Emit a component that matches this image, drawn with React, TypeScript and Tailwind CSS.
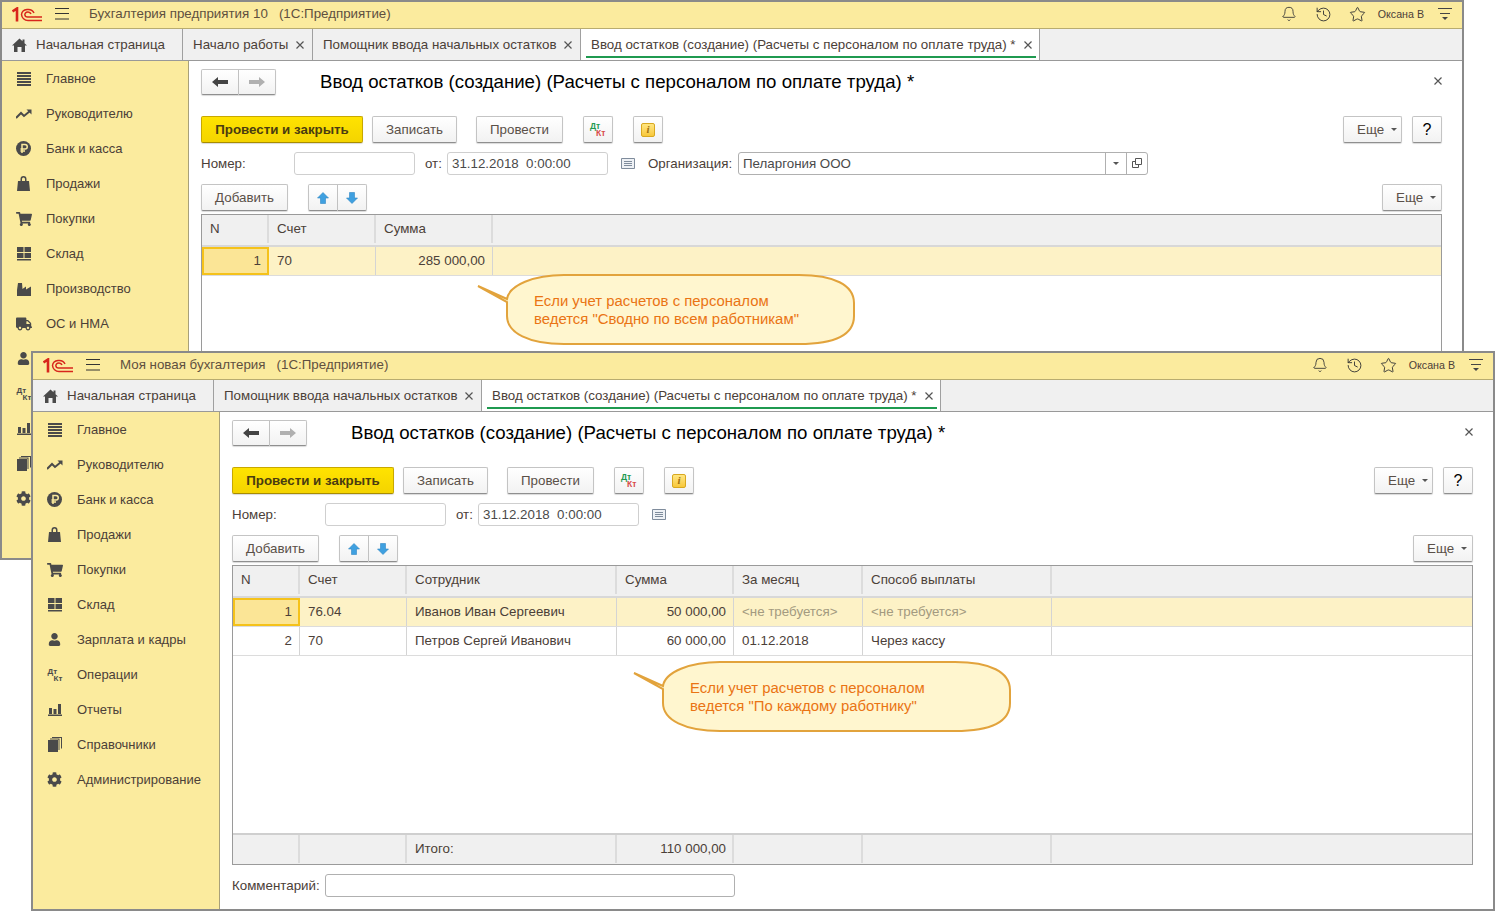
import { Bell, History, Star } from 'lucide-react';
import { FaCog, FaShoppingCart, FaUser, FaTruck } from 'react-icons/fa';
import { twMerge } from 'tailwind-merge';
import type { ReactNode } from 'react';

const TITLE = 'Ввод остатков (создание) (Расчеты с персоналом по оплате труда)';

const Logo = () => (
  <svg width="30" height="15" viewBox="0 0 30 15" fill="none" stroke="#d8261c">
    <path d="M.5 4.500L5 1.500V14.500" strokeWidth="2.600" />
    <path d="M22 6A6.500 5.500 0 0 0 9.500 7.500A6.500 6.500 0 0 0 16 13.500H30" strokeWidth="1.500" />
    <path d="M19 7A3.200 3 0 0 0 12.800 7.500A3 2.800 0 0 0 16 10H30" strokeWidth="1.500" />
  </svg>
);

const Hamburger = () => (
  <svg width="14" height="12" viewBox="0 0 14 12" stroke="#333">
    <path d="M0 .5H14M0 5.500H14M0 11H14" />
  </svg>
);

const MenuDown = () => (
  <svg width="14" height="14" viewBox="0 0 14 14" stroke="#444" fill="#444">
    <path d="M0 1.500H14M2 6.500H12" fill="none" />
    <path d="M4 10H10L7 13Z" stroke="none" />
  </svg>
);

const HomeIcon = () => (
  <svg width="15" height="14" viewBox="0 0 15 14" fill="#4a4a4a" className="mr-[9px] shrink-0">
    <path d="M0 7.500L7.500 .5L10.500 3.300V1.500H12.500V5.200L15 7.500H13V14H9.500V9H5.500V14H2V7.500Z" />
  </svg>
);

const c = '#4a4a4a';
const icons: Record<string, ReactNode> = {
  'Главное': (
    <svg width="14" height="14" viewBox="0 0 14 14" fill={c}>
      <path d="M0 0h14v2H0zM0 3h14v2H0zM0 6h14v2H0zM0 9h14v2H0zM0 12h14v2H0z" />
    </svg>
  ),
  'Руководителю': (
    <svg width="16" height="10" viewBox="0 0 16 10" fill="none" stroke={c} strokeWidth="2">
      <path d="M0 9 L5 4 L8 7 L14 2" />
      <path d="M10.500 .5 H15.500 V5.500 Z" fill={c} stroke="none" />
    </svg>
  ),
  'Банк и касса': (
    <svg width="15" height="15" viewBox="0 0 15 15">
      <circle cx="7.500" cy="7.500" r="7.500" fill={c} />
      <path d="M6 12V3.500H9a2 2 0 0 1 0 4.500H4.500M4.500 10H9" fill="none" stroke="#fbeb9e" strokeWidth="1.500" />
    </svg>
  ),
  'Продажи': (
    <svg width="13" height="15" viewBox="0 0 13 15" fill={c}>
      <path d="M1 5H3.500V3A3 3 0 0 1 9.500 3V5H12L13 15H0Z" />
      <path d="M5 5H8V3A1.500 1.500 0 0 0 5 3Z" fill="#fbeb9e" />
    </svg>
  ),
  'Покупки': <FaShoppingCart size={16} color={c} />,
  'Склад': (
    <svg width="14" height="14" viewBox="0 0 14 14" fill={c}>
      <path d="M0 0h6.500v5H0zM7.500 0H14v5H7.500zM0 6h6.500v5H0zM7.500 6H14v5H7.500zM0 12h14v1.500H0z" />
    </svg>
  ),
  'Производство': (
    <svg width="14" height="14" viewBox="0 0 14 14" fill={c}>
      <path d="M0 14V8L1 1H5L5.500 7L9 4.500V7.500L14 4.500V14Z" />
    </svg>
  ),
  'ОС и НМА': <FaTruck size={16} color={c} />,
  'Зарплата и кадры': <FaUser size={13} color={c} />,
  'Операции': (
    <span className="relative block h-[14px] w-[14px] text-[8px] leading-[7px] font-bold text-[#4a4a4a]">
      <span className="absolute top-0 left-0">Дт</span>
      <span className="absolute top-[7px] left-[6px]">Кт</span>
    </span>
  ),
  'Отчеты': (
    <svg width="14" height="13" viewBox="0 0 14 13" fill={c}>
      <path d="M1 5h3v6H1zM5.500 6h3v5h-3zM10 1h3v10h-3zM0 11.500h14V13H0z" />
    </svg>
  ),
  'Справочники': (
    <svg width="14" height="15" viewBox="0 0 14 15" fill={c}>
      <path d="M0 3h10v12H0zM2 1.500h9.500V13h-1V2.500H2zM4 0h10v11.500h-1V1H4z" />
    </svg>
  ),
  'Администрирование': <FaCog size={15} color={c} />,
};

const Sidebar = ({ items, labelled }: { items: string[]; labelled: number }) => (
  <aside className="w-[187px] shrink-0 border-r border-[#a8a07a] bg-[#fbeb9e]">
    {items.map((name, i) => (
      <div key={name} className="flex h-[35px] items-center text-[13px] whitespace-nowrap text-[#4b4038]">
        <span className="flex w-[44px] shrink-0 justify-center pr-[1px]">{icons[name]}</span>
        {i < labelled ? name : null}
      </div>
    ))}
  </aside>
);

const CloseX = ({ color = '#555' }: { color?: string }) => (
  <svg width="8" height="8" viewBox="0 0 8 8" stroke={color} strokeWidth="1.200">
    <path d="M.5 .5L7.500 7.500M7.500 .5L.5 7.500" />
  </svg>
);

const Tab = ({ label, width }: { label: string; width: string }) => (
  <div className={`flex items-center justify-between border-r border-[#a0a0a0] pr-[8px] pl-[10px] ${width}`}>
    <span className="whitespace-nowrap">{label}</span>
    <CloseX />
  </div>
);

const Btn = ({ children, className = '' }: { children: ReactNode; className?: string }) => (
  <button
    className={twMerge(
      'flex h-[27px] items-center justify-center rounded-[2px] border border-[#c4c4c4] border-b-[#8f8f8f] bg-gradient-to-b from-white to-[#f2f2f2] text-[13.33px] text-[#5a5048] shadow-[0_1px_1px_rgba(0,0,0,0.15)]',
      className,
    )}
  >
    {children}
  </button>
);

const Caret = () => <span className="ml-[7px] h-0 w-0 border-x-[3px] border-t-[3px] border-x-transparent border-t-[#555]" />;

const Arrow = ({ color, left }: { color: string; left?: boolean }) => (
  <svg width="16" height="10" viewBox="0 0 16 10" fill={color}>
    <path d={left ? 'M0 5L6 0V3H16V7H6V10Z' : 'M16 5L10 0V3H0V7H10V10Z'} />
  </svg>
);

const BlueArrow = ({ down }: { down?: boolean }) => (
  <svg width="12" height="12" viewBox="0 0 12 12" fill="#3fa0e0" stroke="#2f86c4" strokeWidth=".6">
    <path d={down ? 'M3.500 .5H8.500V6H11.500L6 11.500L.5 6H3.500Z' : 'M3.500 11.500H8.500V6H11.500L6 .5L.5 6H3.500Z'} />
  </svg>
);

const DtKt = () => (
  <span className="relative block h-[14px] w-[16px] text-[8.5px] leading-[7px] font-bold">
    <span className="absolute top-0 left-0 text-[#1f9a50]">Дт</span>
    <span className="absolute top-[7px] left-[6px] text-[#d84a4a]">Кт</span>
  </span>
);

const InfoIcon = () => (
  <span className="flex h-[14px] w-[14px] items-center justify-center rounded-[2px] border border-[#d8a820] bg-gradient-to-b from-[#ffe680] to-[#f8c838] font-['Liberation_Serif',serif] text-[11px] leading-none font-bold text-[#a07010] italic">
    i
  </span>
);

const Field = ({ value = '', className = '' }: { value?: string; className?: string }) => (
  <div className={`flex h-[23px] items-center rounded-[3px] border border-[#cfcfcf] bg-white px-[4px] pt-[1px] text-[13.33px] whitespace-pre text-[#4a4a4a] ${className}`}>
    {value}
  </div>
);

const ListIcon = () => (
  <svg width="14" height="11" viewBox="0 0 14 11" fill="#eef1f5" stroke="#7f8c9c">
    <path d="M.5 .5H13.500V10.500H.5Z" />
    <path d="M3 3.500H11M3 5.500H11M3 7.500H11" fill="none" />
  </svg>
);

type Col = { title: string; width: string; right?: boolean };
type Row = { cells: string[]; active?: boolean };

const Grid = ({ cols, rows, total, callout }: { cols: Col[]; rows: Row[]; total?: string[]; callout: ReactNode }) => (
  <div className="relative mt-[3px] flex min-h-0 flex-1 flex-col border border-[#9a9a9a] text-[13.33px] text-[#4b4038]">
    <div className="flex h-[32px] shrink-0 border-b-2 border-[#d8d8d8] bg-[#f0f0f0] pb-[2px]">
      {cols.map((col) => (
        <div key={col.title} className={`flex items-center border-r-2 border-[#dcdcdc] px-[8px] ${col.width}`}>
          {col.title}
        </div>
      ))}
      <div className="flex-1" />
    </div>
    {rows.map((row, r) => (
      <div key={r} className={`flex h-[29px] shrink-0 border-b border-[#dcdcdc] ${row.active ? 'bg-[#fdf2c6]' : 'bg-white'}`}>
        {cols.map((col, i) => (
          <div
            key={col.title}
            className={twMerge(
              'flex items-center border-r border-[#d4d4d4] px-[8px] whitespace-nowrap',
              col.width,
              col.right && 'justify-end pr-[7px]',
              row.active && i === 0 && 'border-2 border-[#f5c21a] bg-[#fbe596] pr-[6px]',
              row.cells[i].startsWith('<') && 'text-[#a39a80]',
            )}
          >
            {row.cells[i]}
          </div>
        ))}
        <div className="flex-1" />
      </div>
    ))}
    <div className="flex-1" />
    {total && (
      <div className="flex h-[31px] shrink-0 border-t-2 border-[#cfcfcf] bg-[#f0f0f0] pb-[1px]">
        {cols.map((col, i) => (
          <div
            key={col.title}
            className={twMerge('flex items-center border-r-2 border-[#dcdcdc] px-[8px]', col.width, col.right && 'justify-end pr-[6px]')}
          >
            {total[i]}
          </div>
        ))}
        <div className="flex-1" />
      </div>
    )}
    {callout}
  </div>
);

const Callout = ({ lines, className }: { lines: string[]; className: string }) => (
  <div className={`absolute h-[73px] w-[380px] ${className}`}>
    <svg width="380" height="73" viewBox="0 0 380 73" className="absolute inset-0">
      <path
        d="M31 26C33 12 58 2 88 2L323 2C358 2 378 12 378 30L378 43C378 62 358 71 323 71L88 71C53 71 31 60 31 43L31 29L2 13Z"
        fill="#fff6cf"
        stroke="#e2a33c"
        strokeWidth="2"
      />
    </svg>
    <div className="absolute top-[19px] left-[58px] text-[14.9px] leading-[18px] whitespace-nowrap text-[#ea7414]">
      {lines.map((l) => (
        <div key={l}>{l}</div>
      ))}
    </div>
  </div>
);

const Window = ({
  className,
  appName,
  tabs,
  sideItems,
  labelled,
  form,
  children,
  footer,
}: {
  className: string;
  appName: string;
  tabs: { label: string; width: string }[];
  sideItems: string[];
  labelled: number;
  form?: ReactNode;
  children: ReactNode;
  footer?: ReactNode;
}) => (
  <div className={`absolute flex h-[560px] w-[1464px] flex-col overflow-hidden border-2 border-[#8a8a8a] bg-white font-['Liberation_Sans',sans-serif] ${className}`}>
    <div className="flex h-[27px] shrink-0 items-center border-b border-[#b8ac70] bg-[#fbeb9e] pb-[2px] text-[13.33px] text-[#5f5040]">
      <span className="ml-[10px] flex w-[43px]">
        <Logo />
      </span>
      <Hamburger />
      <span className="ml-[20px] whitespace-pre">{appName}   (1С:Предприятие)</span>
      <div className="ml-auto flex items-center pr-[10px]">
        <Bell size={16} strokeWidth={1.300} color="#333" />
        <History size={17} strokeWidth={1.300} color="#333" className="ml-[18px]" />
        <Star size={17} strokeWidth={1.300} color="#333" className="ml-[17px]" />
        <span className="ml-[12px] text-[10.67px] text-[#4b4038]">Оксана В</span>
        <span className="ml-[14px] flex">
          <MenuDown />
        </span>
      </div>
    </div>
    <div className="flex h-[32px] shrink-0 border-b border-[#999] bg-[#f0f0f0] text-[13.33px] text-[#4b4038]">
      <div className="flex w-[181px] items-center border-r border-[#a0a0a0] pl-[10px] whitespace-nowrap">
        <HomeIcon />
        Начальная страница
      </div>
      {tabs.map((tab) => (
        <Tab key={tab.label} {...tab} />
      ))}
      <div className="relative flex w-[459px] items-center justify-between border-r border-[#a0a0a0] bg-white pr-[7px] pl-[10px]">
        <span className="whitespace-nowrap">{TITLE} *</span>
        <CloseX />
        <span className="absolute right-[3px] bottom-[2px] left-[5px] h-[2px] bg-[#1f9a50]" />
      </div>
    </div>
    <div className="flex min-h-0 flex-1">
      <Sidebar items={sideItems} labelled={labelled} />
      <main className="flex min-w-0 flex-1 flex-col pt-[8px] pr-[20px] pb-[12px] pl-[12px] text-[13.33px] text-[#4b4038]">
        <div className="flex h-[26px] shrink-0 items-start">
          <div className="flex">
            <Btn className="h-[26px] w-[38px] rounded-r-none">
              <Arrow color="#444" left />
            </Btn>
            <Btn className="h-[26px] w-[37px] rounded-l-none border-l-0">
              <Arrow color="#b0b0b0" />
            </Btn>
          </div>
          <h1 className="ml-[44px] text-[18.67px] leading-[25px] font-normal text-black">{TITLE} *</h1>
          <span className="mt-[8px] ml-auto">
            <CloseX />
          </span>
        </div>
        <div className="mt-[21px] flex shrink-0 items-center">
          <Btn className="w-[162px] border-[#c8a800] border-b-[#a88c00] from-[#ffe300] to-[#f4d400] font-bold text-[#4a3c10]">Провести и закрыть</Btn>
          <Btn className="ml-[9px] w-[85px]">Записать</Btn>
          <Btn className="ml-[19px] w-[87px]">Провести</Btn>
          <Btn className="ml-[20px] w-[30px]">
            <DtKt />
          </Btn>
          <Btn className="ml-[20px] w-[30px]">
            <InfoIcon />
          </Btn>
          <Btn className="ml-auto w-[59px] justify-start pl-[13px]">
            Еще
            <Caret />
          </Btn>
          <Btn className="ml-[10px] w-[30px] text-[16px] text-black">?</Btn>
        </div>
        <div className="mt-[8px] flex h-[24px] shrink-0 items-center">
          <span className="w-[93px] pt-[1px]">Номер:</span>
          <Field className="w-[121px]" />
          <span className="ml-[10px] w-[22px] pt-[1px]">от:</span>
          <Field className="w-[161px]" value="31.12.2018  0:00:00" />
          <span className="mr-[13px] ml-[13px] flex">
            <ListIcon />
          </span>
          {form}
        </div>
        <div className="mt-[9px] flex shrink-0 items-center">
          <Btn className="w-[87px]">Добавить</Btn>
          <div className="ml-[20px] flex">
            <Btn className="w-[30px] rounded-r-none">
              <BlueArrow />
            </Btn>
            <Btn className="w-[29px] rounded-l-none border-l-0">
              <BlueArrow down />
            </Btn>
          </div>
          <Btn className="ml-auto w-[60px] justify-start pl-[13px]">
            Еще
            <Caret />
          </Btn>
        </div>
        {children}
        {footer}
      </main>
    </div>
  </div>
);

const OrgField = () => (
  <>
    <span className="w-[90px] pt-[1px]">Организация:</span>
    <div className="flex h-[23px] w-[410px] items-center rounded-[3px] border border-[#b0b0b0] bg-white pl-[4px] text-[13.33px] text-[#4a4a4a]">
      <span className="flex-1 pt-[1px]">Пеларгония ООО</span>
      <span className="flex h-full w-[21px] items-center justify-center border-l border-[#b0b0b0]">
        <span className="h-0 w-0 border-x-[3px] border-t-[3px] border-x-transparent border-t-[#555]" />
      </span>
      <span className="flex h-full w-[21px] items-center justify-center border-l border-[#b0b0b0]">
        <svg width="10" height="10" viewBox="0 0 10 10" fill="none" stroke="#555">
          <path d="M3.500 .5H9.500V6.500H3.500ZM3.500 3.500H.5V9.500H6.500V6.500" />
        </svg>
      </span>
    </div>
  </>
);

export default function App() {
  return (
    <div className="relative h-[912px] w-[1497px] overflow-hidden bg-white">
      <Window
        className="top-0 left-0"
        appName="Бухгалтерия предприятия 10"
        tabs={[
          { label: 'Начало работы', width: 'w-[130px]' },
          { label: 'Помощник ввода начальных остатков', width: 'w-[268px]' },
        ]}
        sideItems={[
          'Главное',
          'Руководителю',
          'Банк и касса',
          'Продажи',
          'Покупки',
          'Склад',
          'Производство',
          'ОС и НМА',
          'Зарплата и кадры',
          'Операции',
          'Отчеты',
          'Справочники',
          'Администрирование',
        ]}
        labelled={8}
        form={<OrgField />}
      >
        <Grid
          cols={[
            { title: 'N', width: 'w-[67px]', right: true },
            { title: 'Счет', width: 'w-[107px]' },
            { title: 'Сумма', width: 'w-[117px]', right: true },
          ]}
          rows={[{ cells: ['1', '70', '285 000,00'], active: true }]}
          callout={<Callout className="top-[58px] left-[274px]" lines={['Если учет расчетов с персоналом', 'ведется "Сводно по всем работникам"']} />}
        />
      </Window>
      <Window
        className="top-[351px] left-[31px]"
        appName="Моя новая бухгалтерия"
        tabs={[{ label: 'Помощник ввода начальных остатков', width: 'w-[268px]' }]}
        sideItems={[
          'Главное',
          'Руководителю',
          'Банк и касса',
          'Продажи',
          'Покупки',
          'Склад',
          'Зарплата и кадры',
          'Операции',
          'Отчеты',
          'Справочники',
          'Администрирование',
        ]}
        labelled={11}
        footer={
          <div className="mt-[9px] flex shrink-0 items-center">
            <span className="w-[93px]">Комментарий:</span>
            <div className="h-[23px] w-[410px] rounded-[3px] border border-[#b0b0b0] bg-white" />
          </div>
        }
      >
        <Grid
          cols={[
            { title: 'N', width: 'w-[67px]', right: true },
            { title: 'Счет', width: 'w-[107px]' },
            { title: 'Сотрудник', width: 'w-[210px]' },
            { title: 'Сумма', width: 'w-[117px]', right: true },
            { title: 'За месяц', width: 'w-[129px]' },
            { title: 'Способ выплаты', width: 'w-[189px]' },
          ]}
          rows={[
            { cells: ['1', '76.04', 'Иванов Иван Сергеевич', '50 000,00', '<не требуется>', '<не требуется>'], active: true },
            { cells: ['2', '70', 'Петров Сергей Иванович', '60 000,00', '01.12.2018', 'Через кассу'] },
          ]}
          total={['', '', 'Итого:', '110 000,00', '', '']}
          callout={<Callout className="top-[94px] left-[399px]" lines={['Если учет расчетов с персоналом', 'ведется "По каждому работнику"']} />}
        />
      </Window>
    </div>
  );
}
